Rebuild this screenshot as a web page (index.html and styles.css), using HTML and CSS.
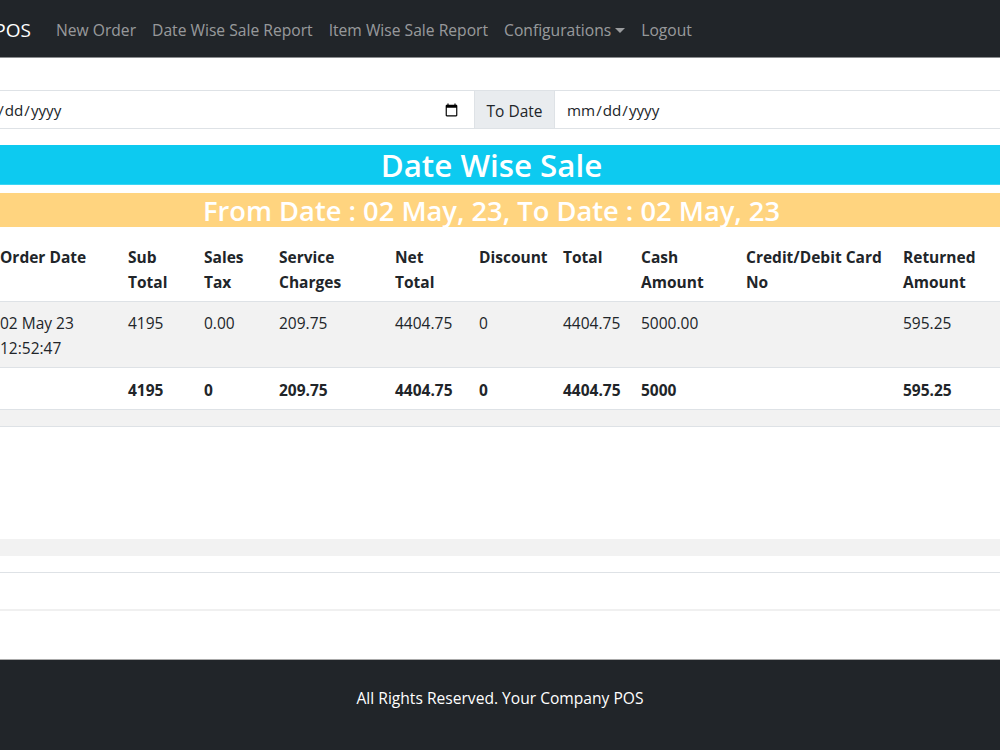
FILE: index.html
```html
<!DOCTYPE html>
<html lang="en">
<head>
<meta charset="utf-8">
<title>Date Wise Sale</title>
<link rel="stylesheet" href="styles.css">
</head>
<body>
<nav class="navbar">
  <a class="brand" href="#">Your Company POS</a>
  <ul class="nav-list">
    <li><a href="#">New Order</a></li>
    <li><a href="#">Date Wise Sale Report</a></li>
    <li><a href="#">Item Wise Sale Report</a></li>
    <li><a href="#" class="dropdown">Configurations</a></li>
    <li><a href="#">Logout</a></li>
  </ul>
</nav>
<main class="content">
  <form class="filters">
    <label class="addon">From Date</label>
    <input class="date-input" type="date">
    <label class="addon">To Date</label>
    <input class="date-input" type="date">
  </form>
  <h2 class="title">Date Wise Sale</h2>
  <h3 class="subtitle">From Date : 02 May, 23, To Date : 02 May, 23</h3>
  <table class="report">
    <colgroup>
      <col class="c1"><col class="c2"><col class="c3"><col class="c4"><col class="c5"><col class="c6"><col class="c7"><col class="c8"><col class="c9"><col class="c10">
    </colgroup>
    <thead>
      <tr>
        <th>Order Date</th><th>Sub Total</th><th>Sales Tax</th><th>Service Charges</th><th>Net Total</th><th>Discount</th><th>Total</th><th>Cash Amount</th><th>Credit/Debit Card No</th><th>Returned Amount</th>
      </tr>
    </thead>
    <tbody>
      <tr class="striped">
        <td>02 May 23 12:52:47</td><td>4195</td><td>0.00</td><td>209.75</td><td>4404.75</td><td>0</td><td>4404.75</td><td>5000.00</td><td></td><td>595.25</td>
      </tr>
      <tr class="totals">
        <td></td><td>4195</td><td>0</td><td>209.75</td><td>4404.75</td><td>0</td><td>4404.75</td><td>5000</td><td></td><td>595.25</td>
      </tr>
    </tbody>
  </table>
  <div class="band band-first"></div>
  <div class="gap-large"></div>
  <div class="band band-second"></div>
  <div class="rule-row rule-row-a"></div>
  <div class="rule-row rule-row-b"></div>
</main>
<footer class="footer">All Rights Reserved. Your Company POS</footer>
</body>
</html>
```
FILE: styles.css
```css
* { box-sizing: border-box; }
html, body { margin: 0; padding: 0; }
body {
  width: 1000px;
  height: 750px;
  overflow: hidden;
  display: flex;
  flex-direction: column;
  font-family: "Open Sans", "Noto Sans", sans-serif;
  font-size: 15.5px;
  line-height: 25px;
  color: #212529;
  background: #fff;
}
a { text-decoration: none; color: inherit; }

.navbar {
  height: 58px;
  flex: none;
  display: flex;
  align-items: center;
  justify-content: flex-start;
  padding-top: 3px;
  background: #212529;
  border-bottom: 1px solid #8b8d8f;
}
.brand {
  flex: none;
  margin-left: -169px;
  width: 200px;
  margin-right: 25px;
  white-space: nowrap;
  text-align: right;
  color: #fff;
  font-size: 19px;
}
.nav-list {
  display: flex;
  list-style: none;
  margin: 0;
  padding: 0;
  gap: 16px;
  font-size: 15.65px;
  color: rgba(255, 255, 255, .55);
}
.dropdown::after {
  content: "";
  display: inline-block;
  margin-left: 4px;
  vertical-align: 3px;
  border-top: 5px solid;
  border-left: 5px solid transparent;
  border-right: 5px solid transparent;
}

.content {
  flex: 1;
  margin-left: -100px;
  width: 1183px;
  padding-top: 32px;
  display: flex;
  flex-direction: column;
}
.filters {
  display: flex;
  margin-left: -36px;
  width: 1208px;
  height: 39px;
  flex: none;
}
.addon {
  flex: none;
  width: 93px;
  display: flex;
  align-items: center;
  justify-content: center;
  padding-top: 3px;
  background: #e9ecef;
  border: 1px solid #dee2e6;
}
.addon + .date-input + .addon { width: 81px; }
.date-input {
  flex: 1;
  min-width: 0;
  padding: 2px 13px 0 11px;
  font: inherit;
  font-size: 15.2px;
  color: #212529;
  background: #fff;
  border: 1px solid #dee2e6;
  border-left: 0;
  border-right: 0;
}
.title {
  margin: 16px 0 8px;
  height: 40px;
  flex: none;
  background: #0dcaf0;
  border-bottom: 1px solid #3dd5f3;
  color: #fff;
  font-size: 31.3px;
  line-height: 40px;
  font-weight: 600;
  text-align: center;
}
.subtitle {
  margin: 0;
  height: 34px;
  flex: none;
  background: #ffd47f;
  color: #fff;
  font-size: 27.3px;
  line-height: 35px;
  font-weight: 600;
  text-align: center;
}
.report {
  margin: 10px 0 0 92px;
  width: 1033px;
  table-layout: fixed;
  border-collapse: collapse;
  flex: none;
}
.c1 { width: 128px; }
.c2 { width: 76px; }
.c3 { width: 75px; }
.c4 { width: 116px; }
.c5 { width: 84px; }
.c6 { width: 84px; }
.c7 { width: 78px; }
.c8 { width: 105px; }
.c9 { width: 157px; }
.c10 { width: 130px; }
th, td {
  padding: 8px;
  text-align: left;
  vertical-align: top;
  border-bottom: 1px solid #dee2e6;
}
th { font-weight: 700; padding-bottom: 6px; }
.striped td { background: #f2f2f2; padding: 9px 8px 6px; }
.totals td { font-weight: 700; height: 42px; padding: 10px 8px 6px; }
.band {
  height: 17px;
  flex: none;
  background: #f2f2f2;
  border-bottom: 1px solid #dee2e6;
}
.gap-large { height: 112px; flex: none; }
.band-second { border-bottom: 0; }
.rule-row { flex: none; }
.rule-row-a { height: 17px; border-bottom: 1px solid #dee2e6; }
.rule-row-b { height: 38px; border-bottom: 2px solid #f0f0f0; }

.footer {
  flex: none;
  height: 91px;
  display: flex;
  align-items: center;
  justify-content: center;
  padding-bottom: 14px;
  background: #212529;
  border-top: 1px solid #aaa;
  color: #fff;
  font-size: 15.6px;
}
```
